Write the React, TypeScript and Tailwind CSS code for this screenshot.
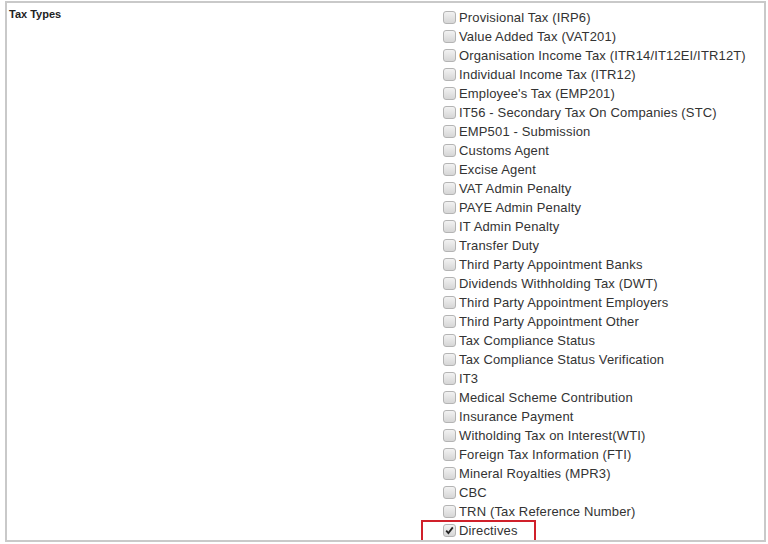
const taxTypes = [
  'Provisional Tax (IRP6)',
  'Value Added Tax (VAT201)',
  'Organisation Income Tax (ITR14/IT12EI/ITR12T)',
  'Individual Income Tax (ITR12)',
  "Employee's Tax (EMP201)",
  'IT56 - Secondary Tax On Companies (STC)',
  'EMP501 - Submission',
  'Customs Agent',
  'Excise Agent',
  'VAT Admin Penalty',
  'PAYE Admin Penalty',
  'IT Admin Penalty',
  'Transfer Duty',
  'Third Party Appointment Banks',
  'Dividends Withholding Tax (DWT)',
  'Third Party Appointment Employers',
  'Third Party Appointment Other',
  'Tax Compliance Status',
  'Tax Compliance Status Verification',
  'IT3',
  'Medical Scheme Contribution',
  'Insurance Payment',
  'Witholding Tax on Interest(WTI)',
  'Foreign Tax Information (FTI)',
  'Mineral Royalties (MPR3)',
  'CBC',
  'TRN (Tax Reference Number)',
  'Directives',
]

function Box({ checked }: { checked: boolean }) {
  return (
    <span className="w-[13px] h-[13px] shrink-0 rounded-[3px] border border-[#b4b4b4] bg-gradient-to-b from-[#f2f2f2] to-[#d6d6d6] flex items-center justify-center">
      {checked && (
        <svg width="9" height="9" viewBox="0 0 9 9">
          <path d="M1.2 4.6 L3.4 7 L7.8 1.4" fill="none" stroke="#222" strokeWidth="1.8" />
        </svg>
      )}
    </span>
  )
}

function TaxRow({ label }: { label: string }) {
  const checked = label === 'Directives'
  const row = (
    <div className="flex items-center gap-[3px] h-[19px]">
      <Box checked={checked} />
      <span>{label}</span>
    </div>
  )
  if (!checked) return row
  return (
    <div className="relative">
      {row}
      <div className="absolute left-[-22px] top-[-1px] w-[115px] h-[27px] border-2 border-[#d0202a]" />
    </div>
  )
}

export default function App() {
  return (
    <div className="w-[768px] h-[544px] bg-white pl-[5px] pt-[1px] font-['Liberation_Sans',Arial,sans-serif]">
      <div className="w-[761px] h-[541px] border-2 border-[#c9c9c9] flex overflow-hidden">
        <div className="w-[436px] pl-[2px] pt-[3px] text-[11px] font-bold text-[#222]">Tax Types</div>
        <div className="pt-[5px] text-[13px] tracking-[0.15px] text-[#333]">
          {taxTypes.map((t) => (
            <TaxRow key={t} label={t} />
          ))}
        </div>
      </div>
    </div>
  )
}
